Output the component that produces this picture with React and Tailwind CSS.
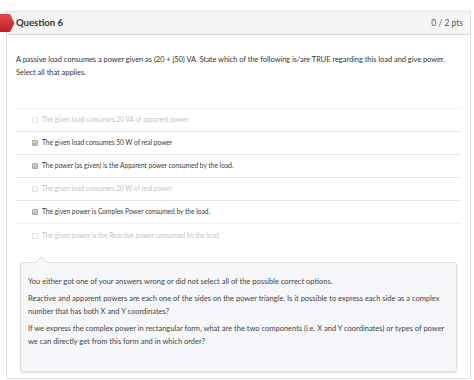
import React from "react";

const answers = [
  { text: "The given load consumes 20 VA of apparent power", checked: false },
  { text: "The given load consumes 50 W of real power", checked: true },
  { text: "The power (as given) is the Apparent power consumed by the load.", checked: true },
  { text: "The given load consumes 20 W of real power", checked: false },
  { text: "The given power is Complex Power consumed by the load.", checked: true },
  { text: "The given power is the Reactive power consumed by the load.", checked: false },
];

function Box({ checked }) {
  if (!checked) {
    return <span className="w-[6px] h-[6px] border border-[#e2e2e2] rounded-[1px] bg-white shrink-0" />;
  }
  return (
    <span className="w-[6px] h-[6px] border border-[#a9a9a9] rounded-[1px] bg-[#d4d4d4] shrink-0 flex items-center justify-center">
      <svg width="5" height="5" viewBox="0 0 10 10">
        <path d="M2 5.2 L4.2 7.4 L8.2 2.6" fill="none" stroke="#777" strokeWidth="1.8" />
      </svg>
    </span>
  );
}

export default function App() {
  return (
    <div className="w-[474px] h-[380px] bg-white relative overflow-hidden" style={{ fontFamily: "Lato, 'Open Sans', sans-serif" }}>
      <div className="pt-[11px] pl-[6px] pr-[3px]">
        <div className="border border-[#e0e0e0] h-[368px] flex flex-col">
          {/* header */}
          <div className="h-[23px] bg-[#f5f5f5] border-b border-[#d6d6d6] flex items-center justify-between pl-[9px] pr-[7px]">
            <span className="text-[9.5px] font-bold text-[#333]">Question 6</span>
            <span className="text-[8.5px] text-[#555]">0 / 2 pts</span>
          </div>

          {/* question */}
          <div className="px-[9px] pt-[18px] text-[7.4px] leading-[13px] text-[#333]">
            <p className="whitespace-nowrap">A passive load consumes a power given as (20 + j50) VA. State which of the following is/are TRUE regarding this load and give power.</p>
            <p>Select all that applies.</p>
          </div>

          {/* answers */}
          <div className="mt-[29px] mx-[9px] border-t border-[#f2f2f2]">
            {answers.map((a, i) => (
              <div
                key={i}
                className={`h-[23px] flex items-center gap-[4px] pl-[16px] ${i < 4 ? "border-b border-[#e4e4e4]" : i === 4 ? "border-b border-[#f0f0f0]" : ""}`}
              >
                <Box checked={a.checked} />
                <span className={`text-[6.6px] ${a.checked ? "text-[#3a3a3a]" : "text-[#c4c4c4]"}`}>{a.text}</span>
              </div>
            ))}
          </div>

          {/* feedback */}
          <div className="relative mt-[15px] mx-[13px] h-[110px] bg-[#f5f7fa] border border-[#dedede] rounded-[3px] shadow-[0_1px_2px_rgba(0,0,0,0.12)] px-[7px] pt-[12px] text-[7.5px] leading-[13px] text-[#444]">
            <span className="absolute -top-[5px] left-[16px] w-[9px] h-[9px] rotate-45 bg-[#f9fafb] border-l border-t border-[#dedede]" />
            <p className="mb-[4px]">You either got one of your answers wrong or did not select all of the possible correct options.</p>
            <p className="mb-[4px]">Reactive and apparent powers are each one of the sides on the power triangle. Is it possible to express each side as a complex number that has both X and Y coordinates?</p>
            <p>If we express the complex power in rectangular form, what are the two components (i.e. X and Y coordinates) or types of power we can directly get from this form and in which order?</p>
          </div>
        </div>
      </div>

      {/* red flag */}
      <svg className="absolute left-0 top-[14px]" width="15" height="18" viewBox="0 0 15 18">
        <defs>
          <linearGradient id="fl" x1="0" y1="0" x2="0" y2="1">
            <stop offset="0" stopColor="#e8474a" />
            <stop offset="1" stopColor="#c41e22" />
          </linearGradient>
        </defs>
        <path d="M0 0 H10 L14.5 9 L10 18 H0 Z" fill="url(#fl)" />
      </svg>
    </div>
  );
}
